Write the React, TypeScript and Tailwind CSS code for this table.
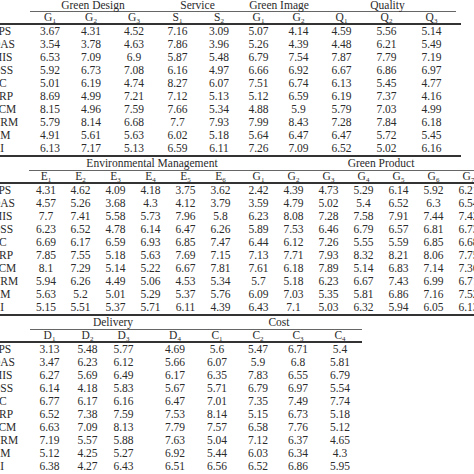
type Group = { title: string; span: string; extra?: string };

type SectionSpec = {
  cols: string;
  groupRow: string;
  groups: Group[];
  heads: [string, string][];
  pads: string[];
  rows: string[][];
  bottomRule: boolean;
};

// row labels are cut off by the left edge, as in the source image
const LABELS = ["SPS", "DAS", "MIS", "DSS", "EC", "ERP", "SCM", "VRM", "KM", "AI"];

const thick = "border-b-2 border-[#333]";

const SECTIONS: SectionSpec[] = [
  {
    cols: "grid-cols-[30px_40px_42px_44px_43px_40px_39px_41px_45px_45px_52px]",
    groupRow: "h-[12px] leading-[11px]",
    groups: [
      { title: "Green Design", span: "col-span-3" },
      { title: "Service", span: "col-span-2" },
      { title: "Green Image", span: "col-span-2" },
      { title: "Quality", span: "col-span-3", extra: "mr-[5px]" },
    ],
    heads: [
      ["G", "1"], ["G", "2"], ["G", "3"], ["S", "1"], ["S", "2"],
      ["G", "1"], ["G", "2"], ["Q", "1"], ["Q", "2"], ["Q", "3"],
    ],
    pads: ["", "", "", "", "", "", "", "", "", "pr-[7px]"],
    rows: [
      ["3.67", "4.31", "4.52", "7.16", "3.09", "5.07", "4.14", "4.59", "5.56", "5.14"],
      ["3.54", "3.78", "4.63", "7.86", "3.96", "5.26", "4.39", "4.48", "6.21", "5.49"],
      ["6.53", "7.09", "6.9", "5.87", "5.48", "6.79", "7.54", "7.87", "7.79", "7.19"],
      ["5.92", "6.73", "7.08", "6.16", "4.97", "6.66", "6.92", "6.67", "6.86", "6.97"],
      ["5.01", "6.19", "4.74", "8.27", "6.07", "7.51", "6.74", "6.13", "5.45", "4.77"],
      ["8.69", "4.99", "7.21", "7.12", "5.13", "5.12", "6.59", "6.19", "7.37", "4.16"],
      ["8.15", "4.96", "7.59", "7.66", "5.34", "4.88", "5.9", "5.79", "7.03", "4.99"],
      ["5.79", "8.14", "6.68", "7.7", "7.93", "7.99", "8.43", "7.28", "7.84", "6.18"],
      ["4.91", "5.61", "5.63", "6.02", "5.18", "5.64", "6.47", "6.47", "5.72", "5.45"],
      ["6.13", "7.17", "5.13", "6.59", "6.11", "7.26", "7.09", "6.52", "5.02", "6.16"],
    ],
    bottomRule: true,
  },
  {
    cols: "grid-cols-[29px_34px_35px_35px_35px_35px_38px_35px_35px_35px_35px_35px_35px_35px_35px]",
    groupRow: "h-[14px] leading-[13px]",
    groups: [
      { title: "Environmental Management", span: "col-span-6", extra: "pl-[34px]" },
      { title: "Green Product", span: "col-span-8" },
    ],
    heads: [
      ["E", "1"], ["E", "2"], ["E", "3"], ["E", "4"], ["E", "5"], ["E", "6"],
      ["G", "1"], ["G", "2"], ["G", "3"], ["G", "4"], ["G", "5"], ["G", "6"], ["G", "7"], ["G", "8"],
    ],
    pads: ["", "", "", "", "", "pr-[3px]", "", "", "", "", "", "", "", ""],
    rows: [
      ["4.31", "4.62", "4.09", "4.18", "3.75", "3.62", "2.42", "4.39", "4.73", "5.29", "6.14", "5.92", "6.21", "5.88"],
      ["4.57", "5.26", "3.68", "4.3", "4.12", "3.79", "3.59", "4.79", "5.02", "5.4", "6.52", "6.3", "6.54", "5.96"],
      ["7.7", "7.41", "5.58", "5.73", "7.96", "5.8", "6.23", "8.08", "7.28", "7.58", "7.91", "7.44", "7.42", "7.15"],
      ["6.23", "6.52", "4.78", "6.14", "6.47", "6.26", "5.89", "7.53", "6.46", "6.79", "6.57", "6.81", "6.73", "6.42"],
      ["6.69", "6.17", "6.59", "6.93", "6.85", "7.47", "6.44", "6.12", "7.26", "5.55", "5.59", "6.85", "6.68", "6.37"],
      ["7.85", "7.55", "5.18", "5.63", "7.69", "7.15", "7.13", "7.71", "7.93", "8.32", "8.21", "8.06", "7.75", "7.88"],
      ["8.1", "7.29", "5.14", "5.22", "6.67", "7.81", "7.61", "6.18", "7.89", "5.14", "6.83", "7.14", "7.36", "6.94"],
      ["5.94", "6.26", "4.49", "5.06", "4.53", "5.34", "5.7", "5.18", "6.23", "6.67", "7.43", "6.99", "6.71", "6.05"],
      ["5.63", "5.2", "5.01", "5.29", "5.37", "5.76", "6.09", "7.03", "5.35", "5.81", "6.86", "7.16", "7.52", "6.48"],
      ["5.15", "5.51", "5.37", "5.71", "6.11", "4.39", "6.43", "7.1", "5.03", "6.32", "5.94", "6.05", "6.13", "5.67"],
    ],
    bottomRule: true,
  },
  {
    cols: "grid-cols-[30px_39px_37px_43px_47px_42px_40px_40px_44px]",
    groupRow: "h-[14px] leading-[13px]",
    groups: [
      { title: "Delivery", span: "col-span-4" },
      { title: "Cost", span: "col-span-4" },
    ],
    heads: [
      ["D", "1"], ["D", "2"], ["D", "3"], ["D", "4"],
      ["C", "1"], ["C", "2"], ["C", "3"], ["C", "4"],
    ],
    pads: ["", "", "pr-[8px]", "pl-[5px]", "", "", "", ""],
    rows: [
      ["3.13", "5.48", "5.77", "4.69", "5.6", "5.47", "6.71", "5.4"],
      ["3.47", "6.23", "6.12", "5.66", "6.07", "5.9", "6.8", "5.81"],
      ["6.27", "5.69", "6.49", "6.17", "6.35", "7.83", "6.55", "6.79"],
      ["6.14", "4.18", "5.83", "5.67", "5.71", "6.79", "6.97", "5.54"],
      ["6.77", "6.17", "6.16", "6.47", "7.01", "7.35", "7.49", "7.74"],
      ["6.52", "7.38", "7.59", "7.53", "8.14", "5.15", "6.73", "5.18"],
      ["6.63", "7.09", "8.13", "7.79", "7.57", "6.58", "7.76", "5.12"],
      ["7.19", "5.57", "5.88", "7.63", "5.04", "7.12", "6.37", "4.65"],
      ["5.12", "4.25", "5.27", "6.92", "5.44", "6.03", "6.34", "4.3"],
      ["6.38", "4.27", "6.43", "6.51", "6.56", "6.52", "6.86", "5.95"],
    ],
    bottomRule: false,
  },
];

function Section({ spec }: { spec: SectionSpec }) {
  return (
    <div className={`grid w-max shrink-0 ${spec.cols}`}>
      {/* group titles */}
      <div className={spec.groupRow} />
      {spec.groups.map((g) => (
        <div
          key={g.title}
          className={`${g.span} ${spec.groupRow} border-b border-[#666] text-center whitespace-nowrap ${g.extra ?? ""}`}
        >
          {g.title}
        </div>
      ))}

      {/* criteria */}
      <div className={`h-[13px] ${thick}`} />
      {spec.heads.map(([letter, idx], i) => (
        <div
          key={i}
          className={`h-[13px] ${thick} text-center leading-[11px] whitespace-nowrap ${spec.pads[i]}`}
        >
          {letter}
          <sub className="text-[7px]">{idx}</sub>
        </div>
      ))}

      {/* values */}
      {spec.rows.map((row, ri) => {
        const last = spec.bottomRule && ri === spec.rows.length - 1;
        const cell = last ? `h-[15px] ${thick}` : "h-[13px]";
        return [
          <div key={`l${ri}`} className={`${cell} leading-[13px] whitespace-nowrap`}>
            <span className="-ml-[8px]">{LABELS[ri]}</span>
          </div>,
          ...row.map((v, ci) => (
            <div
              key={`${ri}-${ci}`}
              className={`${cell} text-center leading-[13px] whitespace-nowrap ${spec.pads[ci]}`}
            >
              {v}
            </div>
          )),
        ];
      })}
    </div>
  );
}

export default function App() {
  return (
    <div className="h-[474px] w-[474px] overflow-hidden bg-white font-['Liberation_Serif',serif] text-[11.5px] text-[#2b2b2b]">
      <div className="flex flex-col">
        {SECTIONS.map((s, i) => (
          <Section key={i} spec={s} />
        ))}
      </div>
    </div>
  );
}
